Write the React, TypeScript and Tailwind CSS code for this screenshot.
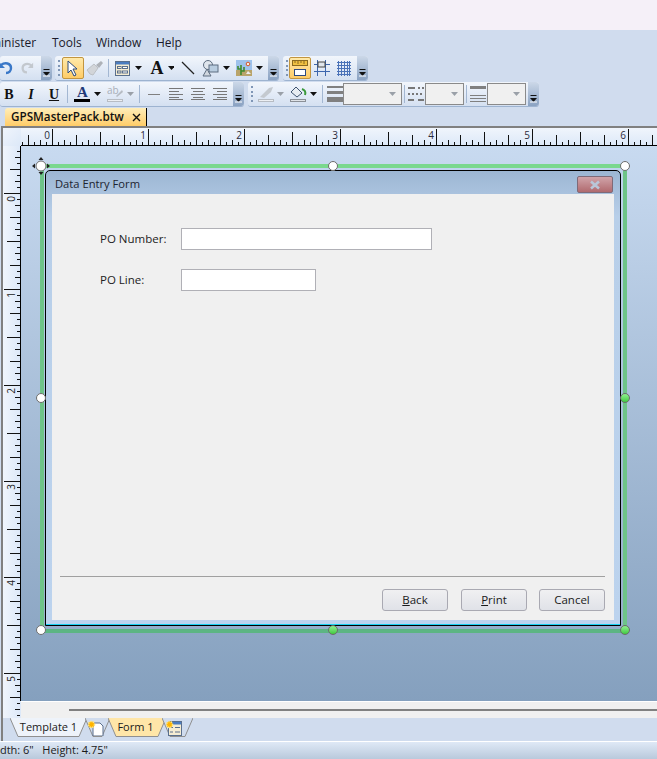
import type { ReactNode } from "react";

const font = "font-['Open_Sans','Noto_Sans',sans-serif]";

function tickSize(i: number) {
    if (i % 16 === 0) return 16;
    if (i % 8 === 0) return 13;
    if (i % 4 === 0) return 10;
    if (i % 2 === 0) return 5;
    return 3;
}

function TopRuler() {
    const ticks = [];
    for (let i = -8; i < 104; i++) {
        const x = 31 + i * 6 + 0.5;
        const size = tickSize(i);
        ticks.push(<line key={i} x1={x} x2={x} y1={17 - size} y2={17} stroke="#111" />);
    }
    return (
        <svg width="636" height="18" className="block bg-gradient-to-b from-[#f0f5fc] to-[#dce8f8]">
            {ticks}
            <line x1="0" x2="636" y1="17.5" y2="17.5" stroke="#000" />
            {[0, 1, 2, 3, 4, 5, 6].map((n) => (
                <text key={n} x={26 + n * 96} y="11" textAnchor="middle" fontSize="10" fill="#2a2a3a" fontFamily="Open Sans">
                    {n}
                </text>
            ))}
        </svg>
    );
}

function LeftRuler() {
    const ticks = [];
    // y=193 on the page is the zero mark, svg starts at y=146
    for (let i = -8; i < 90; i++) {
        const y = 47 + i * 6 + 0.5;
        const size = tickSize(i);
        ticks.push(<line key={i} x1={17 - size} x2={17} y1={y} y2={y} stroke="#111" />);
    }
    return (
        <svg width="18" height="572" className="block shrink-0 bg-gradient-to-r from-[#f0f5fc] to-[#dce8f8]">
            {ticks}
            <line x1="17.5" x2="17.5" y1="0" y2="555" stroke="#000" />
            {[0, 1, 2, 3, 4, 5].map((n) => (
                <text
                    key={n}
                    x="0"
                    y="0"
                    textAnchor="middle"
                    fontSize="10"
                    fill="#222"
                    fontFamily="Open Sans"
                    transform={`translate(12 ${53 + n * 96}) rotate(-90)`}
                >
                    {n}
                </text>
            ))}
        </svg>
    );
}

function Slot({ className, children }: { className: string; children?: ReactNode }) {
    return <div className={`flex h-full shrink-0 items-center justify-center ${className}`}>{children}</div>;
}

function Arrow({ muted }: { muted?: boolean }) {
    return (
        <svg width="7" height="4">
            <path d="M0 0h7L3.5 4z" fill={muted ? "#9aa0a8" : "#111"} />
        </svg>
    );
}

function Grip() {
    return (
        <div className="flex h-full w-[11px] shrink-0 flex-col items-center justify-end rounded-r-[3px] bg-gradient-to-b from-[#ccd8e8] to-[#8aa2c2] pb-[3px]">
            <svg width="7" height="8">
                <rect x="0.5" y="0" width="6" height="1" fill="#111" />
                <path d="M0 3h7L3.5 7z" fill="#111" />
                <path d="M0 7h7" stroke="#fff" strokeWidth="1" />
            </svg>
        </div>
    );
}

function Toolbar({ className, children }: { className: string; children: ReactNode }) {
    return (
        <div className={`flex h-[25px] shrink-0 items-center rounded-[3px] border-b border-[#9db3d0] bg-gradient-to-b from-[#f2f6fc] to-[#d4e0f1] ${className}`}>
            {children}
        </div>
    );
}

function Dots() {
    return (
        <div className="flex h-[18px] w-[2px] shrink-0 flex-col justify-between py-px">
            <div className="h-[2px] bg-[#7f96b6]" />
            <div className="h-[2px] bg-[#7f96b6]" />
            <div className="h-[2px] bg-[#7f96b6]" />
            <div className="h-[2px] bg-[#7f96b6]" />
        </div>
    );
}

function Sep() {
    return <div className="h-[18px] w-px shrink-0 bg-[#a3b7d2]" />;
}

function Active({ children }: { children: ReactNode }) {
    return (
        <div className="flex h-[22px] w-[22px] shrink-0 items-center justify-center rounded-[2px] border border-[#c2953f] bg-gradient-to-b from-[#ffe9a8] to-[#ffcc66]">
            {children}
        </div>
    );
}

function Undo() {
    return (
        <svg width="16" height="16" viewBox="0 0 16 16" fill="none">
            <path d="M3 5c4-3 10-2 10 3 0 3-2 5-5 5" stroke="#3a78c8" strokeWidth="2.4" />
            <path d="M1 2v6h6z" fill="#3a78c8" />
        </svg>
    );
}

function Redo() {
    return (
        <svg width="14" height="14" viewBox="0 0 16 16" fill="none">
            <path d="M13 5C9 2 3 3 3 8c0 3 2 5 5 5" stroke="#c3c8ce" strokeWidth="2.6" />
            <path d="M15 2v6H9z" fill="#c3c8ce" />
        </svg>
    );
}

function Pointer() {
    return (
        <svg width="14" height="17" viewBox="0 0 14 17">
            <path d="M2 1v12l3-3 3 6 2-1-3-6h4z" fill="#fff" stroke="#2c4a7a" strokeWidth="1" />
        </svg>
    );
}

function Broom() {
    return (
        <svg width="18" height="16" viewBox="0 0 18 16">
            <path d="M1 10l7-6 4 4-5 7-3-1z" fill="#d2d5d9" stroke="#bcc0c5" />
            <path d="M10 5l5-4 2 2-4 5z" fill="#aeb2b8" />
        </svg>
    );
}

function FormIcon() {
    return (
        <svg width="15" height="15" viewBox="0 0 15 15">
            <rect x="0.5" y="0.5" width="14" height="14" fill="#f5ecd2" stroke="#5a6f8d" />
            <rect x="1" y="1" width="13" height="2.5" fill="#4a7cc0" />
            <rect x="2.5" y="5.5" width="3.5" height="2" fill="none" stroke="#5a6f8d" />
            <rect x="7.5" y="5.5" width="5" height="2" fill="#fff" stroke="#5a6f8d" />
            <rect x="2.5" y="10" width="3.5" height="2" fill="none" stroke="#5a6f8d" />
            <rect x="7.5" y="10" width="5" height="2" fill="#fff" stroke="#5a6f8d" />
        </svg>
    );
}

function LineIcon() {
    return (
        <svg width="14" height="14">
            <path d="M1 1l12 12" stroke="#222" strokeWidth="1.2" />
        </svg>
    );
}

function Shapes() {
    return (
        <svg width="17" height="17" viewBox="0 0 17 17" className="shrink-0">
            <circle cx="6" cy="5" r="4.5" fill="#dfe5ec" stroke="#5d6d80" />
            <path d="M5 9L1 16h8z" fill="#cfd6de" stroke="#5d6d80" />
            <rect x="7" y="5" width="9" height="7" fill="#b9cde0" stroke="#5d6d80" />
        </svg>
    );
}

function Picture() {
    return (
        <svg width="16" height="16" viewBox="0 0 16 16">
            <rect width="16" height="11" fill="#9ec2ec" />
            <rect y="10" width="16" height="6" fill="#b9a46a" />
            <path d="M5 15V5M5 9H2V6M5 11h3V7" stroke="#3f8a2f" strokeWidth="1.6" fill="none" />
            <circle cx="12" cy="4" r="1.8" fill="#f5f0e0" stroke="#d8562a" />
            <path d="M10 14l2-3 3 3z" fill="#eee" />
        </svg>
    );
}

function RulerIcon() {
    return (
        <svg width="16" height="18" viewBox="0 0 16 18">
            <rect x="0.5" y="1.5" width="15" height="5" fill="#f0c040" stroke="#8a6a20" />
            <path d="M3 2v2M6 2v3M9 2v2M12 2v3" stroke="#8a6a20" />
            <rect x="2.5" y="10.5" width="11" height="6" fill="#fff" stroke="#2f4a80" />
        </svg>
    );
}

function SnapIcon() {
    return (
        <svg width="16" height="16" viewBox="0 0 16 16">
            <path d="M0 4.5h16M0 11.5h16M3.5 0v16M11.5 0v16" stroke="#3d66ad" />
            <rect x="4" y="2" width="7" height="5" fill="#dfe5ec" stroke="#444" />
        </svg>
    );
}

function GridIcon() {
    return (
        <svg width="14" height="15" viewBox="0 0 14 15">
            <path
                d="M0 1.5h14M0 4.5h14M0 7.5h14M0 10.5h14M0 13.5h14M1.5 0v15M4.5 0v15M7.5 0v15M10.5 0v15M12.5 0v15"
                stroke="#4a72b8"
            />
        </svg>
    );
}

function AlignIcon({ kind }: { kind: "left" | "center" | "right" }) {
    const short = kind === "left" ? "M0 3.5h10M0 9.5h10" : kind === "center" ? "M2 3.5h10M2 9.5h10" : "M4 3.5h10M4 9.5h10";
    return (
        <svg width="14" height="12" viewBox="0 0 14 12">
            <path d={`M0 .5h14M0 6.5h14M0 11.5h14 ${short}`} stroke="#777" />
        </svg>
    );
}

function TextColor() {
    return (
        <svg width="17" height="18" viewBox="0 0 17 18">
            <text x="8.5" y="12" textAnchor="middle" fontSize="15" fontWeight="700" fill="#1f3a78" fontFamily="Liberation Serif">
                A
            </text>
            <rect y="14" width="16" height="3" fill="#000" />
        </svg>
    );
}

function Highlight() {
    return (
        <svg width="17" height="18" viewBox="0 0 17 18">
            <text x="0" y="9" fontSize="10" fill="#a9afb8" fontFamily="Open Sans">
                ab
            </text>
            <path d="M9 11l6-6 1 2-6 5z" fill="#b7bcc3" />
            <rect x="0.5" y="14.5" width="15" height="2" fill="#eceff3" stroke="#b7bcc3" />
        </svg>
    );
}

function Pen() {
    return (
        <svg width="17" height="18" viewBox="0 0 17 18">
            <path d="M2 12l9-9 4-1-2 5-7 6z" fill="#c4c9cf" />
            <rect x="0.5" y="14.5" width="15" height="2" fill="#eceff3" stroke="#b7bcc3" />
        </svg>
    );
}

function Bucket() {
    return (
        <svg width="17" height="18" viewBox="0 0 17 18">
            <path d="M1 7l5-5 6 6-5 4z" fill="#e8edf2" stroke="#3f5470" />
            <path d="M12 4c3 1 4 3 3 6" stroke="#3c9a3c" strokeWidth="2" fill="none" />
            <rect x="0.5" y="14.5" width="15" height="2" fill="#dfe3e8" stroke="#8b9097" />
        </svg>
    );
}

function Weights() {
    return (
        <svg width="16" height="18" viewBox="0 0 16 18">
            <rect y="1" width="16" height="2" fill="#808080" />
            <rect y="6" width="16" height="3" fill="#808080" />
            <rect y="12" width="16" height="5" fill="#808080" />
        </svg>
    );
}

function Dashes() {
    return (
        <svg width="16" height="16" viewBox="0 0 16 16">
            <path d="M0 2h7M10 2h2M14 2h2" stroke="#777" strokeWidth="2" />
            <path d="M0 8h2M4 8h2M8 8h2M12 8h2" stroke="#777" strokeWidth="2" />
            <path d="M0 14h6M10 14h6" stroke="#777" strokeWidth="2" />
        </svg>
    );
}

function Lines() {
    return (
        <svg width="16" height="16" viewBox="0 0 16 16">
            <rect y="0" width="16" height="3" fill="#808080" />
            <path d="M0 9.5h16M0 12.5h16M0 15.5h16" stroke="#808080" />
        </svg>
    );
}

function Combo({ className }: { className: string }) {
    return (
        <div className={`flex h-[22px] shrink-0 items-center justify-end border border-[#8a8a8a] bg-[#f0f0f0] pr-[5px] ${className}`}>
            <Arrow muted />
        </div>
    );
}

function NewSpark() {
    return (
        <svg width="9" height="9" viewBox="0 0 9 9" className="absolute left-0 top-0">
            <circle cx="4.5" cy="4.5" r="3" fill="#ffb400" stroke="#ffe680" strokeWidth="1.5" strokeDasharray="1.5 1" />
        </svg>
    );
}

function Tab({ w, className, fill, children }: { w: number; className: string; fill: string; children: ReactNode }) {
    return (
        <div className={`relative flex h-[19px] shrink-0 items-center justify-center ${className}`}>
            <svg width={w} height="19" className="absolute left-0 top-0">
                <path d={`M0 0L8 18.5H${w - 8}L${w} 0`} fill={fill} stroke="#8f8f8f" />
            </svg>
            <div className="relative flex items-center">{children}</div>
        </div>
    );
}

function Handle({ className, green }: { className: string; green?: boolean }) {
    return (
        <div
            className={`absolute h-[10px] w-[10px] rounded-full border border-[#6c6c6c] ${
                green ? "bg-gradient-to-b from-[#8ef08e] to-[#3fca3f]" : "bg-white"
            } ${className}`}
        />
    );
}

function FormButton({ className, children }: { className?: string; children: ReactNode }) {
    return (
        <button className={`h-[22px] w-[66px] rounded-[3px] border border-[#a9a9b2] bg-gradient-to-b from-[#f0f0f2] to-[#e0e2e8] text-[11.5px] text-[#1a1a1a] ${className ?? ""}`}>
            {children}
        </button>
    );
}

export default function App() {
    return (
        <div className={`flex h-[759px] w-[657px] flex-col overflow-hidden bg-[#d0dcee] ${font}`}>
            <div className="h-[30px] shrink-0 bg-[#f5f0f8]" />

            <div className="flex h-[26px] shrink-0 items-center text-[12px] text-[#1a1a2a]">
                <span className="ml-[-25px] w-[77px]">Administer</span>
                <span className="w-[44px]">Tools</span>
                <span className="w-[60px]">Window</span>
                <span>Help</span>
            </div>

            <div className="flex h-[26px] shrink-0">
                <Toolbar className="w-[52px]">
                    <Slot className="ml-[-5px] w-[22px]"><Undo /></Slot>
                    <Slot className="ml-[-1px] w-[22px]"><Redo /></Slot>
                    <div className="flex-1" />
                    <Grip />
                </Toolbar>
                <Toolbar className="ml-[3px] w-[224px]">
                    <div className="ml-[3px]"><Dots /></div>
                    <div className="ml-[2px]"><Active><Pointer /></Active></div>
                    <Slot className="w-[22px]"><Broom /></Slot>
                    <Slot className="w-[4px]"><Sep /></Slot>
                    <Slot className="ml-[2px] w-[20px]"><FormIcon /></Slot>
                    <Slot className="w-[12px]"><Arrow /></Slot>
                    <Slot className="ml-[2px] w-[22px]">
                        <span className="font-['Liberation_Serif',serif] text-[18px] font-bold text-[#111]">A</span>
                    </Slot>
                    <Slot className="w-[6px]"><Arrow /></Slot>
                    <Slot className="w-[28px]"><LineIcon /></Slot>
                    <Slot className="w-[16px]"><Shapes /></Slot>
                    <Slot className="w-[16px]"><Arrow /></Slot>
                    <Slot className="w-[20px]"><Picture /></Slot>
                    <Slot className="w-[10px]"><Arrow /></Slot>
                    <div className="flex-1" />
                    <Grip />
                </Toolbar>
                <Toolbar className="ml-[4px] w-[85px]">
                    <div className="ml-[3px]"><Dots /></div>
                    <div className="ml-px"><Active><RulerIcon /></Active></div>
                    <Slot className="w-[22px]"><SnapIcon /></Slot>
                    <Slot className="w-[22px]"><GridIcon /></Slot>
                    <div className="flex-1" />
                    <Grip />
                </Toolbar>
            </div>

            <div className="flex h-[26px] shrink-0">
                <Toolbar className="w-[244px]">
                    <Slot className="ml-[-2px] w-[22px]">
                        <span className="font-['Liberation_Serif',serif] text-[14px] font-bold text-[#111]">B</span>
                    </Slot>
                    <Slot className="w-[22px]">
                        <span className="font-['Liberation_Serif',serif] text-[14px] font-bold italic text-[#111]">I</span>
                    </Slot>
                    <Slot className="ml-px w-[22px]">
                        <span className="font-['Liberation_Serif',serif] text-[14px] font-bold text-[#111] underline">U</span>
                    </Slot>
                    <Slot className="w-[4px]"><Sep /></Slot>
                    <Slot className="ml-[2px] w-[22px]"><TextColor /></Slot>
                    <Slot className="w-[8px]"><Arrow /></Slot>
                    <Slot className="ml-[3px] w-[22px]"><Highlight /></Slot>
                    <Slot className="w-[8px]"><Arrow muted /></Slot>
                    <Slot className="ml-[3px] w-[4px]"><Sep /></Slot>
                    <Slot className="ml-[2px] w-[22px]">
                        <div className="h-px w-[12px] bg-[#808080]" />
                    </Slot>
                    <Slot className="w-[22px]"><AlignIcon kind="left" /></Slot>
                    <Slot className="w-[22px]"><AlignIcon kind="center" /></Slot>
                    <Slot className="w-[22px]"><AlignIcon kind="right" /></Slot>
                    <div className="flex-1" />
                    <Grip />
                </Toolbar>
                <Toolbar className="ml-[4px] w-[291px]">
                    <div className="ml-[3px]"><Dots /></div>
                    <Slot className="ml-[2px] w-[22px]"><Pen /></Slot>
                    <Slot className="ml-[-1px] w-[8px]"><Arrow muted /></Slot>
                    <Slot className="ml-[3px] w-[22px]"><Bucket /></Slot>
                    <Slot className="w-[8px]"><Arrow /></Slot>
                    <Slot className="ml-[3px] w-[4px]"><Sep /></Slot>
                    <Slot className="ml-[2px] w-[17px]"><Weights /></Slot>
                    <Combo className="w-[59px]" />
                    <Slot className="ml-px w-[3px]"><Sep /></Slot>
                    <Slot className="ml-px w-[18px]"><Dashes /></Slot>
                    <Combo className="w-[39px]" />
                    <Slot className="ml-px w-[3px]"><Sep /></Slot>
                    <Slot className="ml-px w-[18px]"><Lines /></Slot>
                    <Combo className="w-[39px]" />
                    <div className="flex-1" />
                    <Grip />
                </Toolbar>
            </div>

            <div className="flex h-[18px] shrink-0 pl-[5px]">
                <div className="flex h-full w-[142px] items-center rounded-tl-[3px] border-r border-black bg-gradient-to-b from-[#ffeeb8] to-[#ffcc66] pl-[6px] pr-[5px] text-[11.7px] font-semibold text-[#111]">
                    <span className="flex-1">GPSMasterPack.btw</span>
                    <svg width="9" height="9" viewBox="0 0 9 9">
                        <path d="M1 1l7 7M8 1L1 8" stroke="#111" strokeWidth="1.4" />
                    </svg>
                </div>
            </div>

            <div className="ml-px flex flex-1 flex-col border-l-2 border-t-2 border-[#808080]">
                <div className="flex h-[18px] shrink-0">
                    <div className="h-full w-[18px] shrink-0 bg-gradient-to-br from-[#f0f5fc] to-[#dce8f8]" />
                    <TopRuler />
                </div>

                <div className="flex h-[572px] shrink-0">
                    <LeftRuler />
                    <div className="flex flex-1 flex-col">
                        <div className="h-[555px] shrink-0 bg-gradient-to-b from-[#c8daf0] to-[#85a0be] pl-[19px] pt-[18px]">
                            <div className="relative h-[469px] w-[587px] border-4 border-[#7ad88e] border-b-[#5cb583] border-l-[#6ec488] border-r-[#6ec488] bg-gradient-to-b from-[#bfd4ee] to-[#95aecb]">
                                <div className="ml-px mt-[2px] flex h-[456px] w-[576px] flex-col rounded-t-[5px] border border-black bg-gradient-to-b from-[#9cb6d3] via-[#b8cfe9] via-10% to-[#bcd3ee] shadow-[inset_0_-1px_0_#19d0f0]">
                                    <div className="flex h-[23px] shrink-0 items-center justify-between pl-[9px] pr-[7px]">
                                        <span className="pt-[3px] text-[11.2px] text-[#1c2430]">Data Entry Form</span>
                                        <div className="mt-[4px] flex h-[17px] w-[36px] items-center justify-center rounded-[2px] border border-[#7f6a78] bg-gradient-to-b from-[#d0a4aa] to-[#b06a6f]">
                                            <svg width="12" height="10" viewBox="0 0 12 10">
                                                <path d="M2 1.5l8 7M10 1.5l-8 7" stroke="#b9c6d8" strokeWidth="2.6" />
                                            </svg>
                                        </div>
                                    </div>
                                    <div className="mx-[6px] flex h-[426px] flex-col bg-[#f0f0f0] pt-[34px] text-[11.5px] text-[#222]">
                                        <div className="flex h-[22px] items-center">
                                            <span className="w-[129px] shrink-0 pl-[48px]">PO Number:</span>
                                            <div className="h-full w-[251px] border border-[#b0b0b6] bg-white" />
                                        </div>
                                        <div className="mt-[19px] flex h-[22px] items-center">
                                            <span className="w-[129px] shrink-0 pl-[48px]">PO Line:</span>
                                            <div className="h-full w-[135px] border border-[#b0b0b6] bg-white" />
                                        </div>
                                        <div className="flex-1" />
                                        <div className="ml-[8px] mr-[9px] h-px bg-[#a0a0a0]" />
                                        <div className="mb-[9px] ml-auto mr-[9px] mt-[12px] flex gap-[13px]">
                                            <FormButton className="w-[65px]"><span className="underline">B</span>ack</FormButton>
                                            <FormButton><span className="underline">P</span>rint</FormButton>
                                            <FormButton className="ml-[-1px]">Cancel</FormButton>
                                        </div>
                                    </div>
                                </div>
                                <svg width="18" height="18" viewBox="0 0 18 18" className="absolute left-[-12px] top-[-11px]">
                                    <path d="M9 0l2.5 3h-5zM9 18l2.5-3h-5zM0 9l3-2.5v5zM18 9l-3-2.5v5z" fill="#222" />
                                    <circle cx="9" cy="9" r="5" fill="#fff" stroke="#6c6c6c" />
                                </svg>
                                <Handle className="left-[284px] top-[-7px]" />
                                <Handle className="left-[576px] top-[-7px]" />
                                <Handle className="left-[-8px] top-[225px]" />
                                <Handle className="left-[576px] top-[225px]" green />
                                <Handle className="left-[-8px] top-[457px]" />
                                <Handle className="left-[284px] top-[457px]" green />
                                <Handle className="left-[576px] top-[457px]" green />
                            </div>
                        </div>
                        <div className="flex h-[17px] shrink-0 flex-col justify-center border-t border-white bg-[#f0f0f0] pl-[48px]">
                            <div className="h-[2px] bg-[#808080]" />
                        </div>
                    </div>
                </div>

                <div className="flex h-[23px] shrink-0 pl-[7px] text-[11px] text-[#1a1a1a]">
                    <Tab w={77} className="w-[77px]" fill="#eef3fa">Template 1</Tab>
                    <Tab w={25} className="ml-[-2px] w-[25px]" fill="#d0dcee">
                        <div className="relative mr-[3px] h-[16px] w-[18px]">
                            <NewSpark />
                            <svg width="18" height="16" viewBox="0 0 18 16">
                                <path d="M6 3h7l3 3v10H6z" fill="#fff" stroke="#5a6f8d" />
                            </svg>
                        </div>
                    </Tab>
                    <Tab w={58} className="ml-[-2px] w-[58px]" fill="#ffe6a8">
                        <span className="mr-[3px]">Form 1</span>
                    </Tab>
                    <Tab w={31} className="ml-[-4px] w-[31px]" fill="#d0dcee">
                        <div className="relative mr-[8px] h-[16px] w-[18px]">
                            <NewSpark />
                            <svg width="18" height="16" viewBox="0 0 18 16">
                                <rect x="3.5" y="1.5" width="13" height="14" fill="#f5ecd2" stroke="#5a6f8d" />
                                <rect x="4" y="2" width="12" height="2.5" fill="#4a7cc0" />
                                <path d="M5 7.5h3M10 7.5h5M5 12h3M10 12h5" stroke="#5a6f8d" />
                            </svg>
                        </div>
                    </Tab>
                </div>
            </div>

            <div className="flex h-[18px] shrink-0 items-center overflow-hidden border-t border-white bg-gradient-to-b from-[#dfe9f6] to-[#b9c9dc] text-[11px] text-[#1a1a1a]">
                <span className="ml-[-13px] whitespace-pre">Width: 6"   Height: 4.75"</span>
            </div>
        </div>
    );
}
